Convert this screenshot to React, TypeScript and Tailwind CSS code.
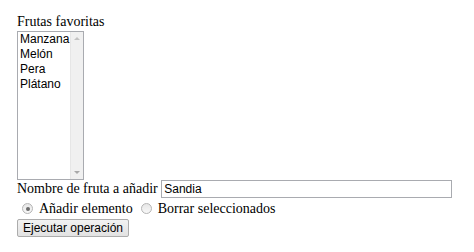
const frutas = ['Manzana', 'Melón', 'Pera', 'Plátano'];

function Radio({ checked }: { checked?: boolean }) {
  return (
    <span className="flex h-[11px] w-[11px] shrink-0 items-center justify-center rounded-full border border-[#b4b4b4] bg-gradient-to-b from-[#e6e6e6] to-[#f8f8f8]">
      {checked && <span className="h-[4px] w-[4px] rounded-full bg-[#6a6a6a]" />}
    </span>
  );
}

export default function App() {
  const serif = { fontFamily: '"Liberation Serif", "Times New Roman", serif' };
  const sans = { fontFamily: '"Liberation Sans", Arial, sans-serif' };

  return (
    <div className="min-h-[252px] w-[474px] bg-white pl-[17px] pt-[13px] text-black">
      <div className="text-[14px] leading-[18px]" style={serif}>
        Frutas favoritas
      </div>

      {/* fake multiple select */}
      <div className="flex h-[149px] w-[67px] border border-[#a9abb0]" style={sans}>
        <div className="flex-1 pl-[2px] text-[12px] leading-[15px]">
          {frutas.map((f) => (
            <div key={f}>{f}</div>
          ))}
        </div>
        <div className="flex w-[13px] flex-col items-center justify-between border-l border-[#e6e6e6] bg-[#f0f0f0] py-[5px]">
          <span className="h-0 w-0 border-x-[3px] border-b-[3px] border-x-transparent border-b-[#c2c2c2]" />
          <span className="h-0 w-0 border-x-[3px] border-t-[3px] border-x-transparent border-t-[#a8a8a8]" />
        </div>
      </div>

      <div className="flex h-[18px] items-center">
        <span className="text-[14px] leading-[18px]" style={serif}>
          Nombre de fruta a añadir
        </span>
        <input
          defaultValue="Sandia"
          className="ml-[3.5px] h-[18px] w-[291px] border border-[#a9abb0] px-[2px] text-[12px] leading-[16px] outline-none"
          style={sans}
        />
      </div>

      <div className="flex h-[21px] items-center text-[14px] leading-[21px]" style={serif}>
        <span className="ml-[5px] mr-[6px]">
          <Radio checked />
        </span>
        <span>Añadir elemento</span>
        <span className="ml-[8px] mr-[6px]">
          <Radio />
        </span>
        <span>Borrar seleccionados</span>
      </div>

      <button
        className="flex h-[18px] w-[112px] items-center justify-center rounded-[2px] border border-[#acacac] bg-gradient-to-b from-[#f2f2f2] to-[#e2e2e2] text-[12px] leading-[16px]"
        style={sans}
      >
        Ejecutar operación
      </button>
    </div>
  );
}
